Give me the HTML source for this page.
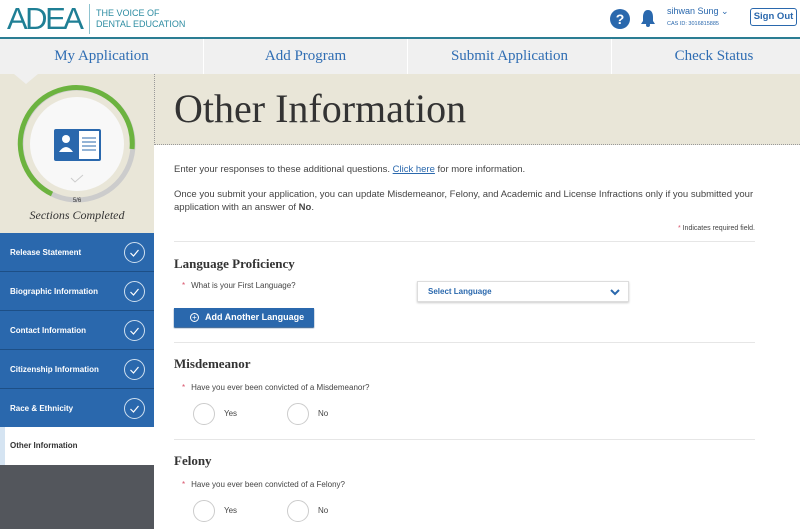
<!DOCTYPE html><html><head><style>
*{margin:0;padding:0;box-sizing:border-box}
body{width:800px;height:529px;overflow:hidden;font-family:"Liberation Sans",sans-serif;background:#fff;position:relative;color:#333}
.a{position:absolute}
.nav div{position:absolute;top:39px;height:35px;width:204px;text-align:center;line-height:35px;font-family:"Liberation Serif",serif;font-size:15px;color:#2f6db3;border-right:1px solid #fff}
.side{left:0;width:154px;height:39px;background:#2a68ad;color:#fff;font-size:8px;font-weight:bold;padding-left:10px;line-height:39px;border-bottom:1px solid #1d4f86}
.side svg{position:absolute;right:9px;top:9px}
.h{font-family:"Liberation Serif",serif;font-weight:bold;font-size:13px;color:#333}
.q{font-size:8px;color:#444}
.q b{color:#d9536b;font-weight:normal;margin-right:6px}
.r{width:22px;height:22px;border:1px solid #ccc;border-radius:50%}
.hr{left:174px;width:581px;height:1px;background:#e6e6e6}
.t{font-size:9.5px;color:#444}
</style></head><body>
<div class="a" style="left:7px;top:1px;font-size:31px;letter-spacing:-2.5px;color:#1f7f95;">ADEA</div>
<div class="a" style="left:89px;top:4px;width:1px;height:30px;background:#8fc3cf"></div>
<div class="a" style="left:96px;top:8px;font-size:9px;line-height:11px;color:#2d8ca2">THE VOICE OF<br>DENTAL EDUCATION</div>
<svg class="a" style="left:610px;top:9px" width="20" height="20"><circle cx="10" cy="10" r="10" fill="#2a68ad"/><text x="10" y="15" font-size="14" font-weight="bold" fill="#fff" text-anchor="middle" font-family="Liberation Sans">?</text></svg>
<svg class="a" style="left:640px;top:9px" width="16" height="18"><path d="M8 1C4 1 3 5 3 8v4l-2 3h14l-2-3V8C13 5 12 1 8 1z" fill="#2a68ad"/><circle cx="8" cy="16" r="2" fill="#2a68ad"/></svg>
<div class="a" style="left:667px;top:6px;font-size:9px;color:#2a68ad">sihwan Sung ⌄</div>
<div class="a" style="left:667px;top:21px;font-size:5.5px;color:#2a68ad">CAS ID: 3016815885</div>
<div class="a" style="left:750px;top:8px;width:47px;height:18px;border:1px solid #2a68ad;border-radius:3px;font-size:9.5px;font-weight:bold;color:#2a68ad;text-align:center;line-height:16px">Sign Out</div>
<div class="a" style="left:0;top:37px;width:800px;height:2px;background:#2b7d93"></div>
<div class="a" style="left:0;top:39px;width:800px;height:35px;background:#f0f0f0"></div>
<div class="nav"><div style="left:0">My Application</div><div style="left:204px">Add Program</div><div style="left:408px">Submit Application</div><div style="left:612px;border:0">Check Status</div></div>
<div class="a" style="left:0;top:74px;width:154px;height:159px;background:#e9e6d8"></div>
<div class="a" style="left:14px;top:74px;width:0;height:0;border-left:12px solid transparent;border-right:12px solid transparent;border-top:10px solid #f0f0f0"></div>
<svg class="a" style="left:17px;top:84px" width="120" height="120"><circle cx="60" cy="60" r="56" fill="none" stroke="#ccc" stroke-width="5"/><path d="M35 110 A56 56 0 1 1 115 65" fill="none" stroke="#6cb33f" stroke-width="5"/><circle cx="60" cy="60" r="47" fill="#f8f8f8"/><rect x="37" y="45" width="47" height="32" rx="2" fill="#2a68ad"/><rect x="62" y="47" width="20" height="28" fill="#fff"/><line x1="65" y1="54" x2="79" y2="54" stroke="#2a68ad"/><line x1="65" y1="58" x2="79" y2="58" stroke="#2a68ad"/><line x1="65" y1="62" x2="79" y2="62" stroke="#2a68ad"/><line x1="65" y1="66" x2="79" y2="66" stroke="#2a68ad"/><circle cx="49" cy="55" r="4" fill="#fff"/><path d="M42 68 q7-10 14 0z" fill="#fff"/><path d="M54 94 l4 4 l8-7" fill="none" stroke="#ccc"/></svg>
<div class="a" style="left:0;top:198px;width:154px;text-align:center;font-size:6px;color:#333">5/6</div>
<div class="a" style="left:0;top:208px;width:154px;text-align:center;font-size:12px;font-style:italic;color:#333;font-family:'Liberation Serif',serif">Sections Completed</div>
<div class="a side" style="top:233px">Release Statement<svg width="21" height="21"><circle cx="10.5" cy="10.5" r="10" fill="none" stroke="#cfe0f0"/><path d="M6.5 11 l3 3 l5-6" fill="none" stroke="#fff" stroke-width="1.2"/></svg></div>
<div class="a side" style="top:272px">Biographic Information<svg width="21" height="21"><circle cx="10.5" cy="10.5" r="10" fill="none" stroke="#cfe0f0"/><path d="M6.5 11 l3 3 l5-6" fill="none" stroke="#fff" stroke-width="1.2"/></svg></div>
<div class="a side" style="top:311px">Contact Information<svg width="21" height="21"><circle cx="10.5" cy="10.5" r="10" fill="none" stroke="#cfe0f0"/><path d="M6.5 11 l3 3 l5-6" fill="none" stroke="#fff" stroke-width="1.2"/></svg></div>
<div class="a side" style="top:350px">Citizenship Information<svg width="21" height="21"><circle cx="10.5" cy="10.5" r="10" fill="none" stroke="#cfe0f0"/><path d="M6.5 11 l3 3 l5-6" fill="none" stroke="#fff" stroke-width="1.2"/></svg></div>
<div class="a side" style="top:389px">Race &amp; Ethnicity<svg width="21" height="21"><circle cx="10.5" cy="10.5" r="10" fill="none" stroke="#cfe0f0"/><path d="M6.5 11 l3 3 l5-6" fill="none" stroke="#fff" stroke-width="1.2"/></svg></div>
<div class="a" style="left:0;top:427px;width:154px;height:38px;background:#fff;border-left:5px solid #d5e4f2;font-size:8px;font-weight:bold;padding-left:5px;line-height:38px;color:#333">Other Information</div>
<div class="a" style="left:0;top:465px;width:154px;height:64px;background:#53565c"></div>
<div class="a" style="left:154px;top:74px;width:646px;height:71px;background:#e9e6d8;border-left:1px dotted #999;border-bottom:1px dotted #999"></div>
<div class="a" style="left:174px;top:85px;font-family:'Liberation Serif',serif;font-size:40px;color:#333">Other Information</div>
<div class="a t" style="left:174px;top:164px">Enter your responses to these additional questions. <u style="color:#2a68ad">Click here</u> for more information.</div>
<div class="a t" style="left:174px;top:188px;line-height:13px;width:590px">Once you submit your application, you can update Misdemeanor, Felony, and Academic and License Infractions only if you submitted your application with an answer of <b>No</b>.</div>
<div class="a" style="left:600px;top:225px;width:155px;text-align:right;font-size:7px;color:#444"><span style="color:#d9536b">*</span> Indicates required field.</div>
<div class="a hr" style="top:241px"></div>
<div class="a h" style="left:174px;top:256px">Language Proficiency</div>
<div class="a q" style="left:182px;top:281px"><b>*</b>What is your First Language?</div>
<div class="a" style="left:417px;top:281px;width:212px;height:21px;border:1px solid #ddd;box-shadow:0 1px 2px #ccc;font-size:8px;font-weight:bold;color:#2a68ad;padding-left:10px;line-height:20px">Select Language<svg style="position:absolute;right:8px;top:7px" width="10" height="7"><path d="M1 1 l4 4 l4-4" fill="none" stroke="#2a68ad" stroke-width="2"/></svg></div>
<div class="a" style="left:174px;top:308px;width:140px;height:19px;background:#2a68ad;color:#fff;font-size:9px;font-weight:bold;line-height:19px;padding-left:16px;box-shadow:0 1px 1px #1d4f86"><span style="display:inline-block;width:9px;height:9px;border:1px solid #fff;border-radius:50%;font-size:8px;line-height:7px;text-align:center;font-weight:normal;margin-right:6px">+</span>Add Another Language</div>
<div class="a hr" style="top:342px"></div>
<div class="a h" style="left:174px;top:356px">Misdemeanor</div>
<div class="a q" style="left:182px;top:383px"><b>*</b>Have you ever been convicted of a Misdemeanor?</div>
<div class="a r" style="left:193px;top:403px"></div><div class="a q" style="left:224px;top:409px">Yes</div>
<div class="a r" style="left:287px;top:403px"></div><div class="a q" style="left:318px;top:409px">No</div>
<div class="a hr" style="top:439px"></div>
<div class="a h" style="left:174px;top:453px">Felony</div>
<div class="a q" style="left:182px;top:480px"><b>*</b>Have you ever been convicted of a Felony?</div>
<div class="a r" style="left:193px;top:500px"></div><div class="a q" style="left:224px;top:506px">Yes</div>
<div class="a r" style="left:287px;top:500px"></div><div class="a q" style="left:318px;top:506px">No</div>
</body></html>
